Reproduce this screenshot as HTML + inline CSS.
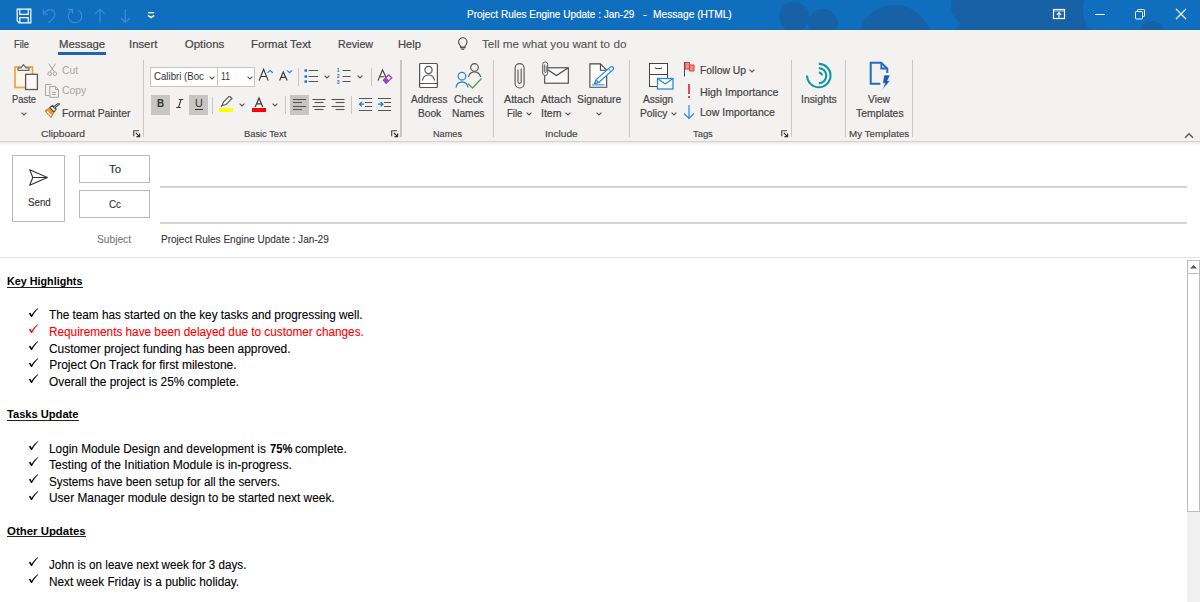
<!DOCTYPE html>
<html><head><meta charset="utf-8">
<style>
*{margin:0;padding:0;box-sizing:border-box}
html,body{width:1200px;height:602px;overflow:hidden;background:#fff;font-family:"Liberation Sans",sans-serif}
.a{position:absolute;display:block}
.t{position:absolute;white-space:nowrap;line-height:1;transform-origin:0 0}
</style></head><body>
<div class="a" style="left:0px;top:0px;width:1200px;height:30px;background:#106ebe;overflow:hidden"></div>
<svg class="a" style="left:740px;top:0px;" width="460" height="30" viewBox="0 0 460 30"><g fill="#1762a6"><circle cx="54" cy="17" r="15"/><circle cx="83" cy="24" r="15"/><circle cx="154.5" cy="42.5" r="37.5"/><path d="M212 0C209 9 213 18 221 23L215 30H350C343 22 341 8 345 0z"/><circle cx="412" cy="33" r="12"/></g></svg>
<div class="a" style="left:0px;top:30px;width:1200px;height:111px;background:#f3f2f1"></div>
<div class="a" style="left:0px;top:141px;width:1200px;height:1px;background:#d4d2d0"></div>
<div class="a" style="left:0;top:142px;width:1200px;height:4px;background:linear-gradient(#ebeae9,#fff)"></div>
<svg class="a" style="left:16px;top:8px;" width="16" height="16" viewBox="0 0 16 16"><path d="M1.2 1.2h13.6v13.6H3.2L1.2 12.8z" fill="none" stroke="#ffffff" stroke-width="1.2"/><path d="M3.8 1.2v5.2h8.4V1.2M3.8 14.8V9.6h8.4v5.2" fill="none" stroke="#ffffff" stroke-width="1.2"/></svg>
<svg class="a" style="left:42px;top:8px;" width="16" height="16" viewBox="0 0 16 16"><path d="M1.5 1.5V6H6" fill="none" stroke="#3d8ad6" stroke-width="1.2"/><path d="M1.8 5.7C4 2.5 7 1.3 9.5 1.8C13 2.6 14 6.5 12 9.5L6.5 15" fill="none" stroke="#3d8ad6" stroke-width="1.2"/></svg>
<svg class="a" style="left:66px;top:8px;" width="17" height="16" viewBox="0 0 17 16"><path d="M12.35 2.2A6.7 6.7 0 1 1 5.6 2.3" fill="none" stroke="#3d8ad6" stroke-width="1.2"/><path d="M2 1.3H6.5V5.7" fill="none" stroke="#3d8ad6" stroke-width="1.2"/></svg>
<svg class="a" style="left:94px;top:8px;" width="13" height="16" viewBox="0 0 13 16"><path d="M6 1.3V14.7M1.3 5.6L6 1.3l4.6 4.3" fill="none" stroke="#3d8ad6" stroke-width="1.25"/></svg>
<svg class="a" style="left:119px;top:8px;" width="13" height="16" viewBox="0 0 13 16"><path d="M6.3 1V14.5M1.9 10l4.4 4.5 4.9-4.5" fill="none" stroke="#3d8ad6" stroke-width="1.25"/></svg>
<svg class="a" style="left:146px;top:10px;" width="10" height="10" viewBox="0 0 10 10"><path d="M1.9 2.75h6.3" stroke="#ffffff" stroke-width="1.2"/><path d="M2 5.3l3.1 2.3 3.1-2.3" fill="none" stroke="#ffffff" stroke-width="1.5"/></svg>
<div class="t" style="left:467.00px;top:8.93px;font-size:10.6px;color:#ffffff;-webkit-text-stroke:0.15px #ffffff;transform:scaleX(0.9440);">Project Rules Engine Update : Jan-29</div>
<div class="t" style="left:643.00px;top:8.93px;font-size:10.6px;color:#ffffff;-webkit-text-stroke:0.15px #ffffff;transform:scaleX(1.0983);">-</div>
<div class="t" style="left:652.50px;top:8.93px;font-size:10.6px;color:#ffffff;-webkit-text-stroke:0.15px #ffffff;transform:scaleX(0.9617);">Message (HTML)</div>
<svg class="a" style="left:1052px;top:8px;" width="14" height="12" viewBox="0 0 14 12"><rect x="1.5" y="1.5" width="11" height="9" fill="none" stroke="#ffffff" stroke-width="1.2"/><rect x="1.5" y="1.5" width="11" height="2.5" fill="#ffffff" opacity=".35"/><path d="M7 10V4.5M4.8 6.8L7 4.5l2.2 2.3" fill="none" stroke="#ffffff" stroke-width="1.1"/></svg>
<div class="a" style="left:1095px;top:14px;width:10px;height:1px;background:#ffffff"></div>
<svg class="a" style="left:1134px;top:8px;" width="12" height="12" viewBox="0 0 12 12"><rect x="1.5" y="3.5" width="7" height="7.5" rx=".8" fill="none" stroke="#ffffff" stroke-width="1"/><path d="M3.5 3.2V2.3a.8.8 0 0 1 .8-.8h5.4a.8.8 0 0 1 .8.8v5.4a.8.8 0 0 1-.8.8H8.8" fill="none" stroke="#ffffff" stroke-width="1"/></svg>
<svg class="a" style="left:1175px;top:8px;" width="12" height="12" viewBox="0 0 12 12"><path d="M1 1l10 10M11 1L1 11" stroke="#ffffff" stroke-width="1.1"/></svg>
<div class="t" style="left:14.00px;top:38.86px;font-size:11.5px;color:#444444;-webkit-text-stroke:0.2px #444444;transform:scaleX(0.8102);">File</div>
<div class="t" style="left:58.50px;top:38.86px;font-size:11.5px;color:#444444;-webkit-text-stroke:0.2px #444444;transform:scaleX(0.9874);">Message</div>
<div class="t" style="left:129.20px;top:38.86px;font-size:11.5px;color:#444444;-webkit-text-stroke:0.2px #444444;transform:scaleX(0.9843);">Insert</div>
<div class="t" style="left:184.70px;top:38.86px;font-size:11.5px;color:#444444;-webkit-text-stroke:0.2px #444444;">Options</div>
<div class="t" style="left:251.30px;top:38.86px;font-size:11.5px;color:#444444;-webkit-text-stroke:0.2px #444444;transform:scaleX(0.9919);">Format Text</div>
<div class="t" style="left:338.30px;top:38.86px;font-size:11.5px;color:#444444;-webkit-text-stroke:0.2px #444444;transform:scaleX(0.9305);">Review</div>
<div class="t" style="left:398.00px;top:38.86px;font-size:11.5px;color:#444444;-webkit-text-stroke:0.2px #444444;transform:scaleX(0.9732);">Help</div>
<div class="t" style="left:482.00px;top:38.86px;font-size:11.5px;color:#555;-webkit-text-stroke:0.1px #555;transform:scaleX(1.0175);">Tell me what you want to do</div>
<div class="a" style="left:58px;top:52px;width:48px;height:3px;background:#1c64b9"></div>
<svg class="a" style="left:455px;top:36.2px;" width="15" height="15" viewBox="0 0 15 15"><path d="M5.6 11.8V10.2C4.3 9 3.6 7.6 3.6 6A4.2 4.2 0 0 1 12 6C12 7.6 11.3 9 10 10.2V11.8Z" fill="none" stroke="#444444" stroke-width="1.1"/><path d="M5.6 11h4.4" stroke="#444444" stroke-width="1"/><path d="M6.4 13.2h2.8" stroke="#444444" stroke-width="1.2"/></svg>
<div class="a" style="left:143px;top:60px;width:1px;height:77px;background:#c8c6c4"></div>
<div class="a" style="left:493px;top:60px;width:1px;height:77px;background:#c8c6c4"></div>
<div class="a" style="left:629px;top:60px;width:1px;height:77px;background:#c8c6c4"></div>
<div class="a" style="left:791px;top:60px;width:1px;height:77px;background:#c8c6c4"></div>
<div class="a" style="left:845px;top:60px;width:1px;height:77px;background:#c8c6c4"></div>
<div class="a" style="left:912px;top:60px;width:1px;height:77px;background:#c8c6c4"></div>
<div class="a" style="left:400px;top:60px;width:2px;height:77px;background:#c8c6c4"></div>
<div class="t" style="left:41.00px;top:129.07px;font-size:9.6px;color:#444;-webkit-text-stroke:0.15px #444;transform:scaleX(1.0733);">Clipboard</div>
<div class="t" style="left:243.50px;top:129.07px;font-size:9.6px;color:#444;-webkit-text-stroke:0.15px #444;transform:scaleX(0.9705);">Basic Text</div>
<div class="t" style="left:432.80px;top:129.07px;font-size:9.6px;color:#444;-webkit-text-stroke:0.15px #444;transform:scaleX(0.9529);">Names</div>
<div class="t" style="left:545.30px;top:129.07px;font-size:9.6px;color:#444;-webkit-text-stroke:0.15px #444;transform:scaleX(1.0562);">Include</div>
<div class="t" style="left:692.80px;top:129.07px;font-size:9.6px;color:#444;-webkit-text-stroke:0.15px #444;transform:scaleX(0.9775);">Tags</div>
<div class="t" style="left:848.90px;top:129.07px;font-size:9.6px;color:#444;-webkit-text-stroke:0.15px #444;transform:scaleX(1.0213);">My Templates</div>
<svg class="a" style="left:133px;top:130px;" width="8" height="8" viewBox="0 0 8 8"><path d="M.7 6.3V.7H6" fill="none" stroke="#444" stroke-width="1.1"/><path d="M2.8 2.8l3.7 3.7M6.6 3.4V6.6H3.4" fill="none" stroke="#333" stroke-width="1.2"/></svg>
<svg class="a" style="left:391px;top:130px;" width="8" height="8" viewBox="0 0 8 8"><path d="M.7 6.3V.7H6" fill="none" stroke="#444" stroke-width="1.1"/><path d="M2.8 2.8l3.7 3.7M6.6 3.4V6.6H3.4" fill="none" stroke="#333" stroke-width="1.2"/></svg>
<svg class="a" style="left:781px;top:130px;" width="8" height="8" viewBox="0 0 8 8"><path d="M.7 6.3V.7H6" fill="none" stroke="#444" stroke-width="1.1"/><path d="M2.8 2.8l3.7 3.7M6.6 3.4V6.6H3.4" fill="none" stroke="#333" stroke-width="1.2"/></svg>
<svg class="a" style="left:1184px;top:132px;" width="10" height="7" viewBox="0 0 10 7"><path d="M1 5.8L5 1.8 9 5.8" fill="none" stroke="#555" stroke-width="1.4"/></svg>
<svg class="a" style="left:13px;top:62px;" width="27" height="29" viewBox="0 0 27 29"><rect x="2" y="5" width="17.5" height="20.5" fill="#fdf6e9" stroke="#eba43f" stroke-width="1.7"/><path d="M5 8.4V5.8h3.2l2.3-3.3 2.3 3.3H16v2.6z" fill="#fff" stroke="#6a6a6a" stroke-width="1.2" stroke-linejoin="round"/><rect x="12.6" y="12.3" width="11.8" height="15.2" fill="#fafafa" stroke="#5a5a5a" stroke-width="1.3"/></svg>
<div class="t" style="left:11.90px;top:93.67px;font-size:10.9px;color:#444444;-webkit-text-stroke:0.2px #444444;transform:scaleX(0.8654);">Paste</div>
<svg class="a" style="left:21px;top:111.5px;" width="6" height="4" viewBox="0 0 6 4"><path d="M.6 .6L3 3 5.4 .6" fill="none" stroke="#555" stroke-width="1.1"/></svg>
<svg class="a" style="left:46px;top:62px;" width="12" height="16" viewBox="0 0 12 16"><path d="M2.8 1.6L8.2 9.8M9.5 1.6L4.2 9.8" fill="none" stroke="#a6a6a6" stroke-width="1"/><circle cx="3.6" cy="11.7" r="1.8" fill="none" stroke="#a6a6a6" stroke-width="1"/><circle cx="8.9" cy="11.7" r="1.8" fill="none" stroke="#a6a6a6" stroke-width="1"/></svg>
<div class="t" style="left:62.00px;top:64.77px;font-size:10.9px;color:#a6a6a6;transform:scaleX(0.9440);">Cut</div>
<svg class="a" style="left:44px;top:83px;" width="16" height="16" viewBox="0 0 16 16"><path d="M7.5 1.5H1.5v11H5" fill="none" stroke="#a6a6a6" stroke-width="1"/><path d="M5.8 3.5h5.7l3 3v7.8H5.8z" fill="#f3f2f1" stroke="#a6a6a6" stroke-width="1"/><path d="M11.5 3.5v3h3M8 9.5h4M8 11.5h4" fill="none" stroke="#a6a6a6" stroke-width="1"/></svg>
<div class="t" style="left:62.00px;top:85.37px;font-size:10.9px;color:#a6a6a6;transform:scaleX(0.9508);">Copy</div>
<svg class="a" style="left:44px;top:103px;" width="17" height="17" viewBox="0 0 17 17"><path d="M1 7.8L5.8 4.6 10 9 7 14.6z" fill="#f29a2e" stroke="#d9731a" stroke-width=".9" stroke-linejoin="round"/><path d="M3.2 8.6L7.2 12.6" stroke="#fff" stroke-width="1.2"/><path d="M5.8 4.6L8.4 2.4 12.2 6.2 10 9z" fill="#fff" stroke="#444" stroke-width="1.1" stroke-linejoin="round"/><path d="M10.3 4.3L14.6 1" stroke="#444" stroke-width="2.6" stroke-linecap="round"/><path d="M10.3 4.3L14.6 1" stroke="#fff" stroke-width=".6" stroke-linecap="round"/></svg>
<div class="t" style="left:62.00px;top:107.67px;font-size:10.9px;color:#444444;-webkit-text-stroke:0.2px #444444;transform:scaleX(0.9500);">Format Painter</div>
<div class="a" style="left:150px;top:67px;width:68px;height:20px;background:#fff;border:1px solid #c8c6c4"></div>
<div class="a" style="left:217px;top:67px;width:38px;height:20px;background:#fff;border:1px solid #c8c6c4"></div>
<div class="t" style="left:153.80px;top:71.22px;font-size:11.2px;color:#333;transform:scaleX(0.8635);">Calibri (Boc</div>
<div class="t" style="left:220.60px;top:71.22px;font-size:11.2px;color:#333;transform:scaleX(0.7727);">11</div>
<svg class="a" style="left:209px;top:76px;" width="6" height="4" viewBox="0 0 6 4"><path d="M.6 .6L3 3 5.4 .6" fill="none" stroke="#555" stroke-width="1.1"/></svg>
<svg class="a" style="left:247px;top:76px;" width="6" height="4" viewBox="0 0 6 4"><path d="M.6 .6L3 3 5.4 .6" fill="none" stroke="#555" stroke-width="1.1"/></svg>
<svg class="a" style="left:255px;top:64px;" width="40" height="22" viewBox="0 0 40 22"><g fill="none" stroke="#3a3a3a" stroke-width="1.15"><path d="M4.1 16.6L8.6 5.4 13.2 16.6M5.9 12.5h5.4"/><path d="M24.6 16.6L28.3 8 32.2 16.6M26 13.4h4.4"/></g><g fill="none" stroke="#2b88d8" stroke-width="1.2"><path d="M12.5 8.9L15.2 6.5 17.9 8.9"/><path d="M32.2 6.5L34.6 8.6 36.9 6.5"/></g></svg>
<div class="a" style="left:298px;top:68px;width:1px;height:18px;background:#c8c6c4"></div>
<svg class="a" style="left:303px;top:68px;" width="17" height="16" viewBox="0 0 17 16"><rect x="1.5" y="1.2" width="2.6" height="2.6" rx=".6" fill="#1f6fc5"/><rect x="1.5" y="7.2" width="2.6" height="2.6" rx=".6" fill="#1f6fc5"/><rect x="1.5" y="12.2" width="2.6" height="2.6" rx=".6" fill="#1f6fc5"/><path d="M5.5 2.5h9.5M5.5 8.5h9.5M5.5 13.5h9.5" stroke="#555" stroke-width="1"/></svg>
<svg class="a" style="left:324px;top:74.8px;" width="6" height="4" viewBox="0 0 6 4"><path d="M.6 .6L3 3 5.4 .6" fill="none" stroke="#555" stroke-width="1.1"/></svg>
<svg class="a" style="left:336px;top:68px;" width="17" height="17" viewBox="0 0 17 17"><text x="0.8" y="4.3" font-size="5" font-weight="bold" fill="#1f6fc5" font-family="Liberation Sans">1</text><text x="0.8" y="10" font-size="5" font-weight="bold" fill="#1f6fc5" font-family="Liberation Sans">2</text><text x="0.8" y="15.5" font-size="5" font-weight="bold" fill="#1f6fc5" font-family="Liberation Sans">3</text><path d="M6.5 2.5h8M6.5 8.5h8M6.5 13.5h8" stroke="#555" stroke-width="1"/></svg>
<svg class="a" style="left:357px;top:74.8px;" width="6" height="4" viewBox="0 0 6 4"><path d="M.6 .6L3 3 5.4 .6" fill="none" stroke="#555" stroke-width="1.1"/></svg>
<div class="a" style="left:371px;top:68px;width:1px;height:18px;background:#c8c6c4"></div>
<svg class="a" style="left:370px;top:64px;" width="26" height="22" viewBox="0 0 26 22"><path d="M8 16.6L12.5 5.8 16 13.3M10 12.7h4.3" fill="none" stroke="#3a3a3a" stroke-width="1.15"/><path d="M13.4 16.2L18.6 11 21.8 13.8 16.2 19.4z" fill="#fff" stroke="#a23fbf" stroke-width="1.3"/><path d="M13.4 16.2L16.2 13.4 19 16.6 16.2 19.4z" fill="#a23fbf"/></svg>
<div class="a" style="left:151px;top:95px;width:19px;height:20px;background:#c8c6c4"></div>
<div class="a" style="left:189px;top:95px;width:19px;height:20px;background:#c8c6c4"></div>
<div class="t" style="left:157.30px;top:98.19px;font-size:11px;color:#333;font-weight:bold;transform:scaleX(0.8965);">B</div>
<svg class="a" style="left:175px;top:98px;" width="9" height="11" viewBox="0 0 9 11"><path d="M3.8 1.5h4.5M1.2 9.5h4.5M6 1.5L3.5 9.5" fill="none" stroke="#333" stroke-width="1.05"/></svg>
<div class="t" style="left:194.70px;top:98.19px;font-size:11px;color:#333;transform:scaleX(0.9848);">U</div>
<div class="a" style="left:194.5px;top:108.5px;width:8px;height:1px;background:#333"></div>
<div class="a" style="left:212px;top:97px;width:1px;height:17px;background:#c8c6c4"></div>
<svg class="a" style="left:219px;top:96px;" width="15" height="12" viewBox="0 0 15 12"><path d="M3 9.5l1.5-3.5 6-6 2.5 2.5-6 6z" fill="#fff" stroke="#555" stroke-width="1.1"/><path d="M2 10.5l2.2-1.8" stroke="#555" stroke-width="1.1"/></svg>
<div class="a" style="left:219px;top:108px;width:14px;height:4px;background:#ffff00"></div>
<svg class="a" style="left:239px;top:103px;" width="6" height="4" viewBox="0 0 6 4"><path d="M.6 .6L3 3 5.4 .6" fill="none" stroke="#555" stroke-width="1.1"/></svg>
<svg class="a" style="left:252px;top:96px;" width="14" height="12" viewBox="0 0 14 12"><path d="M3.2 11L7 2 10.8 11M4.6 7.9h4.8" fill="none" stroke="#3a3a3a" stroke-width="1.2"/></svg>
<div class="a" style="left:252px;top:108px;width:14px;height:4px;background:#ff0000"></div>
<svg class="a" style="left:272px;top:103px;" width="6" height="4" viewBox="0 0 6 4"><path d="M.6 .6L3 3 5.4 .6" fill="none" stroke="#555" stroke-width="1.1"/></svg>
<div class="a" style="left:285px;top:96px;width:1px;height:18px;background:#c8c6c4"></div>
<div class="a" style="left:290px;top:95px;width:19px;height:20px;background:#c8c6c4"></div>
<svg class="a" style="left:292px;top:96px;" width="16" height="16" viewBox="0 0 16 16"><path d="M1 3.5h13" stroke="#555" stroke-width="1.1"/><path d="M1 6.5h9" stroke="#555" stroke-width="1.1"/><path d="M1 10.5h13" stroke="#555" stroke-width="1.1"/><path d="M1 13.5h9" stroke="#555" stroke-width="1.1"/></svg>
<svg class="a" style="left:311px;top:96px;" width="16" height="16" viewBox="0 0 16 16"><path d="M1.5 3.5h13.0" stroke="#555" stroke-width="1.1"/><path d="M3.5 6.5h9.0" stroke="#555" stroke-width="1.1"/><path d="M1.5 10.5h13.0" stroke="#555" stroke-width="1.1"/><path d="M3.5 13.5h9.0" stroke="#555" stroke-width="1.1"/></svg>
<svg class="a" style="left:330px;top:96px;" width="16" height="16" viewBox="0 0 16 16"><path d="M1.5 3.5h13.0" stroke="#555" stroke-width="1.1"/><path d="M5.5 6.5h9.0" stroke="#555" stroke-width="1.1"/><path d="M1.5 10.5h13.0" stroke="#555" stroke-width="1.1"/><path d="M5.5 13.5h9.0" stroke="#555" stroke-width="1.1"/></svg>
<div class="a" style="left:351px;top:96px;width:1px;height:18px;background:#c8c6c4"></div>
<svg class="a" style="left:358px;top:96px;" width="16" height="16" viewBox="0 0 16 16"><path d="M1 2.5h13M7 6.5h7M7 10.5h7M1 14.5h13" stroke="#555" stroke-width="1"/><path d="M1.5 8.2h4.5M3.8 6l-2.3 2.2 2.3 2.2" fill="none" stroke="#1f7bd0" stroke-width="1.2"/></svg>
<svg class="a" style="left:377px;top:96px;" width="16" height="16" viewBox="0 0 16 16"><path d="M1 2.5h13M7 6.5h7M7 10.5h7M1 14.5h13" stroke="#555" stroke-width="1"/><path d="M1 8.2h4.5M3.7 6L6 8.2 3.7 10.4" fill="none" stroke="#1f7bd0" stroke-width="1.2"/></svg>
<svg class="a" style="left:418px;top:62px;" width="21" height="27" viewBox="0 0 21 27"><rect x="1.6" y="1.5" width="17.8" height="24" rx="1" fill="#fff" stroke="#555" stroke-width="1.2"/><path d="M1.6 21.5h17.8" stroke="#555" stroke-width="1"/><circle cx="10.5" cy="8" r="3.6" fill="none" stroke="#555" stroke-width="1.2"/><path d="M4.5 18.5c.5-3.5 3-5.5 6-5.5s5.5 2 6 5.5" fill="none" stroke="#555" stroke-width="1.2"/></svg>
<div class="t" style="left:410.50px;top:93.67px;font-size:10.9px;color:#444444;-webkit-text-stroke:0.2px #444444;transform:scaleX(0.9149);">Address</div>
<div class="t" style="left:417.90px;top:107.97px;font-size:10.9px;color:#444444;-webkit-text-stroke:0.2px #444444;transform:scaleX(0.9315);">Book</div>
<svg class="a" style="left:454px;top:62px;" width="30" height="28" viewBox="0 0 30 28"><circle cx="20.5" cy="5.5" r="3.8" fill="none" stroke="#555" stroke-width="1.2"/><path d="M14.5 15c.6-3.2 3-5 6-5s5.4 1.8 6 5" fill="none" stroke="#555" stroke-width="1.2"/><circle cx="8" cy="14.2" r="3.8" fill="none" stroke="#2b88d8" stroke-width="1.3"/><path d="M2 25.5c.6-3.5 3-5.5 6-5.5s5.4 2 6 5.5" fill="none" stroke="#2b88d8" stroke-width="1.3"/><path d="M14 21.5l4.5 4.5 9-9.5" fill="none" stroke="#4ca64c" stroke-width="1.3"/></svg>
<div class="t" style="left:453.70px;top:93.67px;font-size:10.9px;color:#444444;-webkit-text-stroke:0.2px #444444;transform:scaleX(0.9336);">Check</div>
<div class="t" style="left:451.90px;top:107.97px;font-size:10.9px;color:#444444;-webkit-text-stroke:0.2px #444444;transform:scaleX(0.9406);">Names</div>
<svg class="a" style="left:513px;top:62px;" width="13" height="28" viewBox="0 0 13 28"><rect x="2.1" y="1.6" width="9" height="24.4" rx="4.5" fill="none" stroke="#5a5a5a" stroke-width="1.15"/><path d="M5 7.5V19.8a1.6 1.6 0 0 0 3.2 0V6.5" fill="none" stroke="#5a5a5a" stroke-width="1.1"/></svg>
<div class="t" style="left:503.70px;top:93.67px;font-size:10.9px;color:#444444;-webkit-text-stroke:0.2px #444444;transform:scaleX(0.9838);">Attach</div>
<div class="t" style="left:506.90px;top:107.97px;font-size:10.9px;color:#444444;-webkit-text-stroke:0.2px #444444;transform:scaleX(0.8718);">File</div>
<svg class="a" style="left:525.5px;top:111.5px;" width="6" height="4" viewBox="0 0 6 4"><path d="M.6 .6L3 3 5.4 .6" fill="none" stroke="#555" stroke-width="1.1"/></svg>
<svg class="a" style="left:541px;top:60px;" width="30" height="26" viewBox="0 0 30 26"><rect x="3.7" y="7.8" width="23.6" height="15.4" fill="#fafafa" stroke="#454545" stroke-width="1.1"/><path d="M3.7 7.8L15.5 15.5 27.3 7.8" fill="none" stroke="#454545" stroke-width="1.1"/><rect x="1.7" y="1.9" width="5" height="13.6" rx="2.5" fill="#f3f2f1" stroke="#5a5a5a" stroke-width="1"/><path d="M3.4 4.5V11.6a.9 .9 0 0 0 1.8 0V5.5" fill="none" stroke="#5a5a5a" stroke-width=".9"/></svg>
<div class="t" style="left:540.80px;top:93.67px;font-size:10.9px;color:#444444;-webkit-text-stroke:0.2px #444444;transform:scaleX(0.9805);">Attach</div>
<div class="t" style="left:540.80px;top:107.97px;font-size:10.9px;color:#444444;-webkit-text-stroke:0.2px #444444;transform:scaleX(0.9670);">Item</div>
<svg class="a" style="left:564.5px;top:111.5px;" width="6" height="4" viewBox="0 0 6 4"><path d="M.6 .6L3 3 5.4 .6" fill="none" stroke="#555" stroke-width="1.1"/></svg>
<svg class="a" style="left:588px;top:62px;" width="27" height="28" viewBox="0 0 27 28"><path d="M1.9 1.9H12.4L18.7 8.2V25.2H1.9Z" fill="#fff" stroke="#444" stroke-width="1.1"/><path d="M12.4 1.9V8.2H18.7" fill="none" stroke="#444" stroke-width="1.1"/><path d="M6.5 21.7L8.21 17.61 22.23 5.08A1.9 1.9 0 0 1 24.77 7.92L10.75 20.45Z" fill="#fff" stroke="#2b88d8" stroke-width="1.2" stroke-linejoin="round"/><path d="M6.5 21.7L8.21 17.61 10.75 20.45Z" fill="#8cc4f0" stroke="#2b88d8" stroke-width="1"/><path d="M20.4 6.75L22.9 9.6" stroke="#2b88d8" stroke-width="1"/><path d="M3.9 22.8H16.6" stroke="#4da0e4" stroke-width="1.3"/></svg>
<div class="t" style="left:576.70px;top:93.67px;font-size:10.9px;color:#444444;-webkit-text-stroke:0.2px #444444;transform:scaleX(0.9474);">Signature</div>
<svg class="a" style="left:595.5px;top:111.5px;" width="6" height="4" viewBox="0 0 6 4"><path d="M.6 .6L3 3 5.4 .6" fill="none" stroke="#555" stroke-width="1.1"/></svg>
<svg class="a" style="left:647px;top:62px;" width="28" height="29" viewBox="0 0 28 29"><rect x="2.5" y="1.5" width="18" height="11" fill="#fff" stroke="#444" stroke-width="1"/><rect x="2.5" y="12.5" width="18" height="12" fill="#fff" stroke="#444" stroke-width="1"/><path d="M8.5 5.5v1h6v-1" fill="none" stroke="#444" stroke-width="1"/><rect x="10.5" y="16.5" width="15.5" height="10.5" fill="#fff" stroke="#2b88d8" stroke-width="1.3"/><path d="M10.5 16.5l7.75 5.5 7.75-5.5" fill="none" stroke="#2b88d8" stroke-width="1.3"/></svg>
<div class="t" style="left:642.80px;top:93.67px;font-size:10.9px;color:#444444;-webkit-text-stroke:0.2px #444444;transform:scaleX(0.9235);">Assign</div>
<div class="t" style="left:639.50px;top:107.97px;font-size:10.9px;color:#444444;-webkit-text-stroke:0.2px #444444;transform:scaleX(0.9449);">Policy</div>
<svg class="a" style="left:670.5px;top:111.5px;" width="6" height="4" viewBox="0 0 6 4"><path d="M.6 .6L3 3 5.4 .6" fill="none" stroke="#555" stroke-width="1.1"/></svg>
<svg class="a" style="left:683px;top:61px;" width="12" height="16" viewBox="0 0 12 16"><path d="M1.5 1v14.5" stroke="#444" stroke-width="1"/><path d="M2 1.5h4.5v2.5h4.5v6h-4.5v-2h-4.5z" fill="#f58b8b" stroke="#d83b40" stroke-width="1"/><path d="M6.5 4v4" stroke="#d83b40" stroke-width="1"/></svg>
<div class="t" style="left:699.50px;top:65.37px;font-size:10.9px;color:#444444;-webkit-text-stroke:0.2px #444444;transform:scaleX(0.9515);">Follow Up</div>
<svg class="a" style="left:748.5px;top:68.5px;" width="6" height="4" viewBox="0 0 6 4"><path d="M.6 .6L3 3 5.4 .6" fill="none" stroke="#555" stroke-width="1.1"/></svg>
<div class="a" style="left:688px;top:84px;width:2px;height:10px;background:#e5484d"></div>
<div class="a" style="left:688px;top:96px;width:2px;height:2px;background:#e5484d"></div>
<div class="t" style="left:699.50px;top:86.77px;font-size:10.9px;color:#444444;-webkit-text-stroke:0.2px #444444;transform:scaleX(0.9818);">High Importance</div>
<svg class="a" style="left:683px;top:104px;" width="12" height="16" viewBox="0 0 12 16"><path d="M6 1v13.5M1 9.5l5 5 5-5" fill="none" stroke="#2b88d8" stroke-width="1.2"/></svg>
<div class="t" style="left:699.50px;top:107.37px;font-size:10.9px;color:#444444;-webkit-text-stroke:0.2px #444444;transform:scaleX(0.9671);">Low Importance</div>
<svg class="a" style="left:804px;top:61px;" width="30" height="30" viewBox="0 0 30 30"><g fill="none" stroke="#0f97a8" stroke-width="2.1"><path d="M14.8 2.9A11.7 11.7 0 1 1 3.1 14.6"/><path d="M14.8 7.1A7.5 7.5 0 0 1 14.8 22.1"/><path d="M14.8 11.5A3.1 3.1 0 0 1 17.9 14.6"/></g></svg>
<div class="t" style="left:800.50px;top:93.67px;font-size:10.9px;color:#444444;-webkit-text-stroke:0.2px #444444;transform:scaleX(0.9534);">Insights</div>
<svg class="a" style="left:868px;top:61px;" width="24" height="30" viewBox="0 0 24 30"><path d="M12.3 22.7H2.7V1.7h10.6l6 6v4.2" fill="none" stroke="#1f6cc0" stroke-width="2"/><path d="M13.3 2v5.5h5.8" fill="none" stroke="#1f6cc0" stroke-width="1.8"/><path d="M16 14H22.3L19.6 19.8H22.3L14.3 28.7L16.8 22.2H14.5Z" fill="#175ab3" stroke="#f3f2f1" stroke-width=".7"/></svg>
<div class="t" style="left:868.10px;top:93.67px;font-size:10.9px;color:#444444;-webkit-text-stroke:0.2px #444444;transform:scaleX(0.9388);">View</div>
<div class="t" style="left:855.50px;top:107.97px;font-size:10.9px;color:#444444;-webkit-text-stroke:0.2px #444444;transform:scaleX(0.9597);">Templates</div>
<div class="a" style="left:12px;top:155px;width:53px;height:67px;border:1px solid #b9b9b9"></div>
<svg class="a" style="left:28px;top:168px;" width="21" height="19" viewBox="0 0 21 19"><path d="M1.7 1.7L19.4 9.5 1.7 17.2 4.8 9.5z" fill="none" stroke="#333" stroke-width="1.1" stroke-linejoin="round"/><path d="M4.8 9.5h14.6" stroke="#333" stroke-width="1"/></svg>
<div class="t" style="left:27.50px;top:197.03px;font-size:11.3px;color:#333;-webkit-text-stroke:0.15px #333;transform:scaleX(0.8603);">Send</div>
<div class="a" style="left:79px;top:155px;width:71px;height:28px;border:1px solid #b9b9b9"></div>
<div class="t" style="left:108.60px;top:163.63px;font-size:11.3px;color:#333;-webkit-text-stroke:0.15px #333;transform:scaleX(1.0066);">To</div>
<div class="a" style="left:79px;top:190px;width:71px;height:28px;border:1px solid #b9b9b9"></div>
<div class="t" style="left:108.60px;top:199.03px;font-size:11.3px;color:#333;-webkit-text-stroke:0.15px #333;transform:scaleX(0.8704);">Cc</div>
<div class="a" style="left:160px;top:186px;width:1027px;height:2px;background:#d4d4d4"></div>
<div class="a" style="left:160px;top:222px;width:1027px;height:2px;background:#d4d4d4"></div>
<div class="t" style="left:97.00px;top:233.53px;font-size:11.3px;color:#777;-webkit-text-stroke:0.1px #777;transform:scaleX(0.9022);">Subject</div>
<div class="t" style="left:160.50px;top:233.53px;font-size:11.3px;color:#3a3a3a;-webkit-text-stroke:0.15px #3a3a3a;transform:scaleX(0.8876);">Project Rules Engine Update : Jan-29</div>
<div class="a" style="left:0px;top:257px;width:1200px;height:1px;background:#e6e4e2"></div>
<div class="a" style="left:1187px;top:260px;width:13px;height:14px;background:#fff;border:1px solid #bdbdbd"></div>
<svg class="a" style="left:1189px;top:263px;" width="9" height="7" viewBox="0 0 9 7"><path d="M1 5.5L4.5 2 8 5.5z" fill="#555"/></svg>
<div class="a" style="left:1187px;top:273px;width:13px;height:239px;background:#fff;border:1px solid #bdbdbd"></div>
<div class="a" style="left:1187px;top:512px;width:13px;height:90px;background:#f0f0f0"></div>
<div class="t" style="left:7.40px;top:275.99px;font-size:11.0px;color:#000;font-weight:bold;transform:scaleX(0.9792);">Key Highlights</div>
<div class="a" style="left:7px;top:287px;width:76px;height:1px;background:#222"></div>
<svg class="a" style="left:28px;top:307.58px;" width="11" height="10" viewBox="0 0 11 10"><path d="M.9 5.6L2.4 4.7 3.7 6.9C5.3 4.3 7.3 2 9.7 .3L10.2 .8C7.8 3 5.8 5.6 4 8.9H3.1z" fill="#000"/></svg>
<div class="t" style="left:49.20px;top:309.42px;font-size:12px;color:#000;-webkit-text-stroke:0.1px #000;transform:scaleX(0.9792);">The team has started on the key tasks and progressing well.</div>
<svg class="a" style="left:28px;top:324.22px;" width="11" height="10" viewBox="0 0 11 10"><path d="M.9 5.6L2.4 4.7 3.7 6.9C5.3 4.3 7.3 2 9.7 .3L10.2 .8C7.8 3 5.8 5.6 4 8.9H3.1z" fill="#ff0000"/></svg>
<div class="t" style="left:49.20px;top:326.06px;font-size:12px;color:#ff0000;-webkit-text-stroke:0.1px #ff0000;transform:scaleX(0.9811);">Requirements have been delayed due to customer changes.</div>
<svg class="a" style="left:28px;top:340.86px;" width="11" height="10" viewBox="0 0 11 10"><path d="M.9 5.6L2.4 4.7 3.7 6.9C5.3 4.3 7.3 2 9.7 .3L10.2 .8C7.8 3 5.8 5.6 4 8.9H3.1z" fill="#000"/></svg>
<div class="t" style="left:49.20px;top:342.70px;font-size:12px;color:#000;-webkit-text-stroke:0.1px #000;transform:scaleX(0.9919);">Customer project funding has been approved.</div>
<svg class="a" style="left:28px;top:357.5px;" width="11" height="10" viewBox="0 0 11 10"><path d="M.9 5.6L2.4 4.7 3.7 6.9C5.3 4.3 7.3 2 9.7 .3L10.2 .8C7.8 3 5.8 5.6 4 8.9H3.1z" fill="#000"/></svg>
<div class="t" style="left:49.20px;top:359.34px;font-size:12px;color:#000;-webkit-text-stroke:0.1px #000;">Project On Track for first milestone.</div>
<svg class="a" style="left:28px;top:374.14px;" width="11" height="10" viewBox="0 0 11 10"><path d="M.9 5.6L2.4 4.7 3.7 6.9C5.3 4.3 7.3 2 9.7 .3L10.2 .8C7.8 3 5.8 5.6 4 8.9H3.1z" fill="#000"/></svg>
<div class="t" style="left:49.20px;top:375.98px;font-size:12px;color:#000;-webkit-text-stroke:0.1px #000;transform:scaleX(0.9895);">Overall the project is 25% complete.</div>
<div class="t" style="left:7.40px;top:409.11px;font-size:11.0px;color:#000;font-weight:bold;transform:scaleX(1.0109);">Tasks Update</div>
<div class="a" style="left:7px;top:420px;width:72px;height:1px;background:#222"></div>
<svg class="a" style="left:28px;top:440.7px;" width="11" height="10" viewBox="0 0 11 10"><path d="M.9 5.6L2.4 4.7 3.7 6.9C5.3 4.3 7.3 2 9.7 .3L10.2 .8C7.8 3 5.8 5.6 4 8.9H3.1z" fill="#000"/></svg>
<div class="t" style="left:49.20px;top:442.54px;font-size:12px;color:#000;-webkit-text-stroke:0.1px #000;transform:scaleX(0.9848);">Login Module Design and development is</div>
<div class="t" style="left:269.60px;top:442.54px;font-size:12px;color:#000;font-weight:bold;transform:scaleX(0.9333);">75%</div>
<div class="t" style="left:294.90px;top:442.54px;font-size:12px;color:#000;-webkit-text-stroke:0.1px #000;transform:scaleX(0.9958);">complete.</div>
<svg class="a" style="left:28px;top:457.34px;" width="11" height="10" viewBox="0 0 11 10"><path d="M.9 5.6L2.4 4.7 3.7 6.9C5.3 4.3 7.3 2 9.7 .3L10.2 .8C7.8 3 5.8 5.6 4 8.9H3.1z" fill="#000"/></svg>
<div class="t" style="left:49.20px;top:459.18px;font-size:12px;color:#000;-webkit-text-stroke:0.1px #000;transform:scaleX(1.0084);">Testing of the Initiation Module is in-progress.</div>
<svg class="a" style="left:28px;top:473.98px;" width="11" height="10" viewBox="0 0 11 10"><path d="M.9 5.6L2.4 4.7 3.7 6.9C5.3 4.3 7.3 2 9.7 .3L10.2 .8C7.8 3 5.8 5.6 4 8.9H3.1z" fill="#000"/></svg>
<div class="t" style="left:49.20px;top:475.82px;font-size:12px;color:#000;-webkit-text-stroke:0.1px #000;transform:scaleX(0.9757);">Systems have been setup for all the servers.</div>
<svg class="a" style="left:28px;top:490.62px;" width="11" height="10" viewBox="0 0 11 10"><path d="M.9 5.6L2.4 4.7 3.7 6.9C5.3 4.3 7.3 2 9.7 .3L10.2 .8C7.8 3 5.8 5.6 4 8.9H3.1z" fill="#000"/></svg>
<div class="t" style="left:49.20px;top:492.46px;font-size:12px;color:#000;-webkit-text-stroke:0.1px #000;transform:scaleX(0.9914);">User Manager module design to be started next week.</div>
<div class="t" style="left:7.40px;top:525.59px;font-size:11.0px;color:#000;font-weight:bold;transform:scaleX(1.0384);">Other Updates</div>
<div class="a" style="left:7px;top:536px;width:79px;height:1px;background:#222"></div>
<svg class="a" style="left:28px;top:557.18px;" width="11" height="10" viewBox="0 0 11 10"><path d="M.9 5.6L2.4 4.7 3.7 6.9C5.3 4.3 7.3 2 9.7 .3L10.2 .8C7.8 3 5.8 5.6 4 8.9H3.1z" fill="#000"/></svg>
<div class="t" style="left:49.20px;top:559.02px;font-size:12px;color:#000;-webkit-text-stroke:0.1px #000;transform:scaleX(0.9702);">John is on leave next week for 3 days.</div>
<svg class="a" style="left:28px;top:573.82px;" width="11" height="10" viewBox="0 0 11 10"><path d="M.9 5.6L2.4 4.7 3.7 6.9C5.3 4.3 7.3 2 9.7 .3L10.2 .8C7.8 3 5.8 5.6 4 8.9H3.1z" fill="#000"/></svg>
<div class="t" style="left:49.20px;top:575.66px;font-size:12px;color:#000;-webkit-text-stroke:0.1px #000;transform:scaleX(0.9840);">Next week Friday is a public holiday.</div>
</body></html>
